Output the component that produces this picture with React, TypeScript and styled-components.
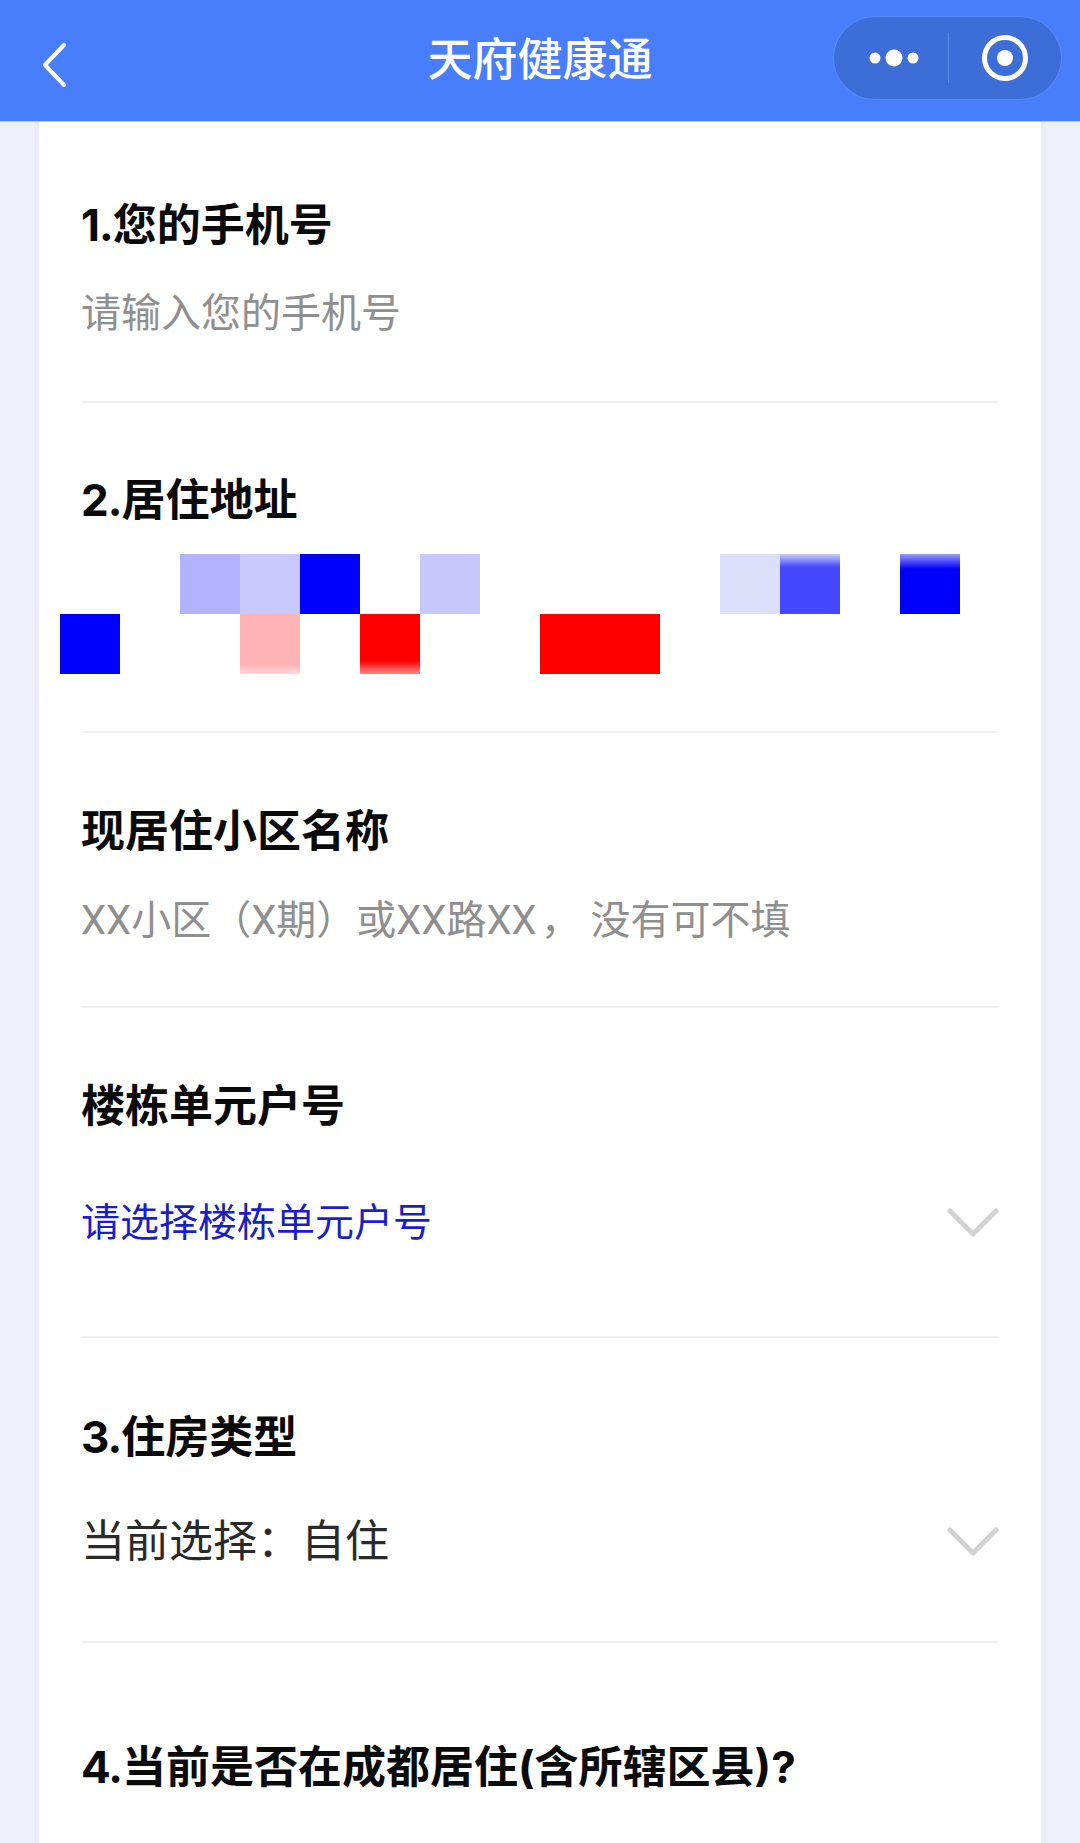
import React from "react";
import styled, { createGlobalStyle } from "styled-components";

const GlobalStyle = createGlobalStyle`
  html, body {
    margin: 0;
    padding: 0;
    background: #eff0fa;
  }
  body {
    font-family: Roboto, "Noto Sans CJK SC", sans-serif;
  }
`;

const Page = styled.div`
  width: 1080px;
  height: 1843px;
  overflow: hidden;
  background: #eff0fa;
`;

const NavBar = styled.header`
  height: 122px;
  box-sizing: border-box;
  background: #487dfc;
  border-bottom: 1px solid #b9cffb;
  display: grid;
  grid-template-columns: 1fr auto 1fr;
  align-items: center;
  padding: 0 19px;
`;

const BackButton = styled.div`
  margin: 8px 0 0 21px;
  display: flex;
`;

const NavTitle = styled.h1`
  margin: 0;
  font-size: 45px;
  font-weight: 500;
  color: #fff;
  line-height: 1;
`;

const Capsule = styled.div`
  justify-self: end;
  width: 227px;
  height: 82px;
  margin-bottom: 5px;
  border-radius: 41px;
  background: #3d6dd6;
  box-shadow: 0 0 0 1px #5a8af5;
  display: grid;
  grid-template-columns: 114px 1px 1fr;
  align-items: center;
`;

const CapsuleSlot = styled.div<{ $shift?: number }>`
  display: flex;
  align-items: center;
  justify-content: center;
  padding-left: ${(p) => p.$shift ?? 0}px;
`;

const CapsuleLine = styled.div`
  height: 50px;
  background: #5a86e6;
`;

const Card = styled.main`
  margin: 0 39px;
  background: #fff;
  padding: 0 42px;
  box-shadow: -5px 0 0 #eaecf7, 5px 0 0 #eaecf7;
`;

const Field = styled.section<{ $height: number }>`
  height: ${(p) => p.$height}px;
  border-bottom: 2px solid #f1f1f3;
  box-sizing: border-box;
  display: flex;
  flex-direction: column;
`;

const Label = styled.div<{ $top: number }>`
  margin-top: ${(p) => p.$top}px;
  font-family: Inter, "Noto Sans CJK SC", sans-serif;
  font-size: 44px;
  line-height: 50px;
  font-weight: 700;
  color: #0a0a0a;
`;

const LabelNumber = styled.span`
  letter-spacing: -1px;
`;

const Value = styled.div<{ $tone: "hint" | "link" | "text"; $gap: number }>`
  margin-top: ${(p) => p.$gap}px;
  display: flex;
  align-items: center;
  justify-content: space-between;
  font-size: ${(p) => (p.$tone === "hint" ? 40 : p.$tone === "link" ? 39 : 44)}px;
  line-height: 50px;
  color: ${(p) =>
    p.$tone === "hint" ? "#8f8f8f" : p.$tone === "link" ? "#1a1fc4" : "#2a2a2a"};
`;

const Mosaic = styled.div`
  margin: 29px 0 0 -21px;
  display: grid;
  grid-template-columns: repeat(15, 60px);
  grid-auto-rows: 60px;
`;

const MosaicCell = styled.div<{ $fill: string }>`
  background: ${(p) => p.$fill};
`;

const mosaicCells: string[] = [
  "", "", "#b3b3fd", "#c9c9fd", "#0000ff", "", "#c6c8fd", "", "", "", "", "#dcdffa",
  "linear-gradient(#c9cbfc, #4648fd 22%)", "", "linear-gradient(#9a9afc, #0000ff 25%)",
  "#0000ff", "", "", "linear-gradient(#feb4b4 85%, #ffd8d8)", "",
  "linear-gradient(#ff0000 78%, #ff8a8a)", "", "", "#ff0000", "#ff0000", "", "", "", "", "",
];

function BackIcon() {
  return (
    <svg width="28" height="46" viewBox="0 0 28 46" fill="none">
      <path d="M24 3 L5 23 L24 43" stroke="#fff" strokeWidth="4" strokeLinecap="round" strokeLinejoin="round" />
    </svg>
  );
}

function DotsIcon() {
  return (
    <svg width="50" height="20" viewBox="0 0 50 20" fill="#fff">
      <circle cx="6" cy="10" r="5.5" />
      <circle cx="25" cy="10" r="8.5" />
      <circle cx="44" cy="10" r="5.5" />
    </svg>
  );
}

function RecordIcon() {
  return (
    <svg width="48" height="48" viewBox="0 0 48 48" fill="none">
      <circle cx="24" cy="24" r="20.5" stroke="#fff" strokeWidth="5" />
      <circle cx="24" cy="24" r="8" fill="#fff" />
    </svg>
  );
}

function ChevronIcon() {
  return (
    <svg width="52" height="30" viewBox="0 0 52 30" fill="none">
      <path d="M3 3 L26 26 L49 3" stroke="#d2d2d2" strokeWidth="5" strokeLinecap="round" strokeLinejoin="round" />
    </svg>
  );
}

export default function App() {
  return (
    <Page>
      <GlobalStyle />
      <NavBar>
        <BackButton>
          <BackIcon />
        </BackButton>
        <NavTitle>天府健康通</NavTitle>
        <Capsule>
          <CapsuleSlot $shift={6}>
            <DotsIcon />
          </CapsuleSlot>
          <CapsuleLine />
          <CapsuleSlot>
            <RecordIcon />
          </CapsuleSlot>
        </Capsule>
      </NavBar>
      <Card>
        <Field $height={281}>
          <Label $top={78}><LabelNumber>1.</LabelNumber>您的手机号</Label>
          <Value $tone="hint" $gap={39}>请输入您的手机号</Value>
        </Field>
        <Field $height={330}>
          <Label $top={72}><LabelNumber>2.</LabelNumber>居住地址</Label>
          <Mosaic>
            {mosaicCells.map((fill, i) => (
              <MosaicCell key={i} $fill={fill || "transparent"} />
            ))}
          </Mosaic>
        </Field>
        <Field $height={275}>
          <Label $top={73}>现居住小区名称</Label>
          <Value $tone="hint" $gap={40}>XX小区（X期）或XX路XX&#8202;， 没有可不填</Value>
        </Field>
        <Field $height={330}>
          <Label $top={73}>楼栋单元户号</Label>
          <Value $tone="link" $gap={67}>
            请选择楼栋单元户号
            <ChevronIcon />
          </Value>
        </Field>
        <Field $height={305}>
          <Label $top={74}><LabelNumber>3.</LabelNumber>住房类型</Label>
          <Value $tone="text" $gap={55}>
            当前选择：自住
            <ChevronIcon />
          </Value>
        </Field>
        <Field $height={300}>
          <Label $top={99}><LabelNumber>4.</LabelNumber>当前是否在成都居住(含所辖区县)?</Label>
        </Field>
      </Card>
    </Page>
  );
}
